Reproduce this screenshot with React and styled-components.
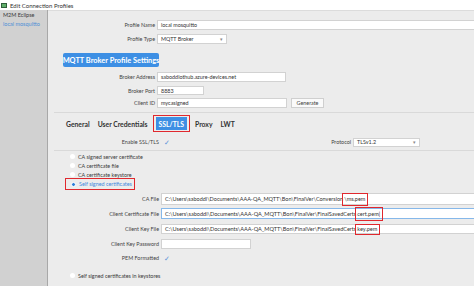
import styled, { createGlobalStyle } from "styled-components";

const GlobalStyle = createGlobalStyle`
  html, body {
    margin: 0;
    padding: 0;
    background: #fff;
    overflow: hidden;
  }
  body {
    font-family: Lato, "Open Sans", sans-serif;
    color: #2b2b2b;
  }
`;

const Window = styled.div`
  width: 474px;
  height: 286px;
  display: flex;
  flex-direction: column;
  overflow: hidden;
  background: #fff;
`;

const TitleBar = styled.div`
  height: 10px;
  flex: none;
  display: flex;
  align-items: center;
  gap: 3px;
  padding-left: 1px;
  font-size: 6px;
  color: #333;
`;

const Body = styled.div`
  flex: 1;
  display: flex;
  min-height: 0;
`;

const Sidebar = styled.div`
  width: 47px;
  flex: none;
  background: #d1d1d1;
  border-right: 1px solid #a8a8a8;
  padding-top: 1px;
  font-size: 5.5px;
`;

const SideItem = styled.div`
  height: 9px;
  line-height: 9px;
  padding-left: 3px;
  color: ${(p) => (p.active ? "#4f8fd6" : "#3a3a3a")};
`;

const Main = styled.div`
  flex: 1;
  min-width: 0;
  background: #ececec;
  border-top: 1px solid #dcdcdc;
  display: flex;
  flex-direction: column;
  padding-top: 9px;
  font-size: 5.4px;
  overflow: hidden;
`;

const Row = styled.div`
  flex: none;
  display: flex;
  align-items: center;
  gap: 2px;
  height: ${(p) => p.h || 10}px;
  margin-top: ${(p) => p.mt || 0}px;
`;

const Label = styled.div`
  width: ${(p) => p.w || 107}px;
  flex: none;
  text-align: right;
  color: #444;
  white-space: nowrap;
`;

const Input = styled.div`
  box-sizing: border-box;
  height: 100%;
  width: ${(p) => (p.w ? p.w + "px" : "auto")};
  flex: ${(p) => (p.w ? "none" : 1)};
  min-width: 0;
  background: #fff;
  border: 1px solid ${(p) => (p.focus ? "#86b8ea" : "#d2d2d2")};
  border-right-width: ${(p) => (p.w ? 1 : 0)}px;
  display: flex;
  align-items: center;
  padding-left: 3px;
  white-space: nowrap;
  color: #333;
  font-size: ${(p) => p.fs || 5.4}px;
`;

const Select = styled(Input)`
  justify-content: space-between;
  padding-right: 3px;
  border-right-width: 1px;
`;

const Caret = styled.span`
  color: #8a8a8a;
  font-size: 5px;
`;

const SectionButton = styled.div`
  flex: none;
  margin: 9px 0 0 15px;
  width: 96px;
  height: 14px;
  box-sizing: border-box;
  background: #3d8fe4;
  border-radius: 2px;
  color: #fff;
  font-weight: 700;
  font-size: 7.4px;
  display: flex;
  align-items: center;
  justify-content: center;
  white-space: nowrap;
`;

const SmallButton = styled.div`
  margin-left: 2px;
  width: 33px;
  height: 10px;
  box-sizing: border-box;
  background: #fafafa;
  border: 1px solid #cfcfcf;
  display: flex;
  align-items: center;
  justify-content: center;
  color: #444;
`;

const Separator = styled.div`
  flex: none;
  height: 1px;
  background: #d9d9d9;
  margin: ${(p) => p.mt || 0}px 0 0 6px;
`;

const Tabs = styled.div`
  flex: none;
  display: flex;
  align-items: center;
  gap: 8px;
  height: 15px;
  margin: 3px 0 0 18px;
  font-weight: 700;
  font-size: 6.8px;
  color: #333;
`;

const Tab = styled.div`
  white-space: nowrap;
`;

const SelectedTab = styled.div`
  border: 1.5px solid #e0282e;
  padding: 1px 2px;
  margin: 0 -3px;
`;

const TabInner = styled.div`
  background: #3d8fe4;
  color: #fff;
  padding: 0 3px;
  height: 13px;
  display: flex;
  align-items: center;
`;

const Check = styled.span`
  color: #5b93d8;
  font-size: 7px;
  margin-left: 3px;
`;

const Protocol = styled.div`
  margin: 0 54px 0 auto;
  height: 9px;
  display: flex;
  align-items: center;
  gap: 2px;
`;

const RadioList = styled.div`
  flex: none;
  display: flex;
  flex-direction: column;
  margin: ${(p) => p.mt || 0}px 0 0 17px;
`;

const RadioRow = styled.div`
  display: flex;
  align-items: center;
  gap: 3px;
  height: ${(p) => p.h || 9}px;
  padding-left: 5px;
  color: ${(p) => (p.active ? "#3f88dc" : "#3a3a3a")};
  white-space: nowrap;
`;

const Highlight = styled.div`
  align-self: flex-start;
  border: 1.5px solid #e0282e;
  padding: 1px 2px 1px 0;
  margin-top: -1px;
`;

const Radio = styled.span`
  width: 5px;
  height: 5px;
  border-radius: 50%;
  box-sizing: border-box;
  border: ${(p) => (p.on ? "1.5px solid #fff" : "none")};
  background: ${(p) => (p.on ? "#2f7fd8" : "#fff")};
`;

const Marked = styled.span`
  display: inline-flex;
  align-items: center;
  border: 1.5px solid #e0282e;
  height: ${(p) => p.h || 13}px;
  box-sizing: border-box;
  padding: 0 2px 0 1px;
  margin-left: -1px;
`;

function TitleIcon() {
  return (
    <svg width="6" height="5" viewBox="0 0 6 5">
      <rect x="0" y="0" width="6" height="5" fill="#2f5d3a" />
      <rect x="1" y="1" width="4" height="3" fill="#5fae6a" />
    </svg>
  );
}

const base = "C:\\Users\\saboddi\\Documents\\AAA-QA_MQTT\\Bon\\FinalVer\\";

export default function App() {
  return (
    <>
      <GlobalStyle />
      <Window>
        <TitleBar>
          <TitleIcon />
          Edit Connection Profiles
        </TitleBar>
        <Body>
          <Sidebar>
            <SideItem>M2M Eclipse</SideItem>
            <SideItem active={1}>local mosquitto</SideItem>
          </Sidebar>
          <Main>
            <Row>
              <Label>Profile Name</Label>
              <Input>local mosquitto</Input>
            </Row>
            <Row mt={4}>
              <Label>Profile Type</Label>
              <Select w={70}>
                MQTT Broker <Caret>▾</Caret>
              </Select>
            </Row>
            <SectionButton>MQTT Broker Profile Settings</SectionButton>
            <Row mt={5}>
              <Label>Broker Address</Label>
              <Input w={129}>saboddiothub.azure-devices.net</Input>
            </Row>
            <Row mt={4} h={9}>
              <Label>Broker Port</Label>
              <Input w={47}>8883</Input>
            </Row>
            <Row mt={3}>
              <Label>Client ID</Label>
              <Input w={130}>mycasigned</Input>
              <SmallButton>Generate</SmallButton>
            </Row>
            <Separator mt={4} />
            <Tabs>
              <Tab>General</Tab>
              <Tab>User Credentials</Tab>
              <SelectedTab>
                <TabInner>SSL/TLS</TabInner>
              </SelectedTab>
              <Tab>Proxy</Tab>
              <Tab>LWT</Tab>
            </Tabs>
            <Row mt={6} h={10}>
              <Label w={111}>Enable SSL/TLS</Label>
              <Check>✓</Check>
              <Protocol>
                <Label w={40}>Protocol</Label>
                <Select w={67}>
                  TLSv1.2 <Caret>▾</Caret>
                </Select>
              </Protocol>
            </Row>
            <Separator mt={3} />
            <RadioList mt={1}>
              <RadioRow>
                <Radio />
                CA signed server certificate
              </RadioRow>
              <RadioRow>
                <Radio />
                CA certificate file
              </RadioRow>
              <RadioRow>
                <Radio />
                CA certificate keystore
              </RadioRow>
              <Highlight>
                <RadioRow active={1} h={8}>
                  <Radio on={1} />
                  Self signed certificates
                </RadioRow>
              </Highlight>
            </RadioList>
            <Row mt={3} h={12}>
              <Label w={111}>CA File</Label>
              <Input fs={5.5}>
                {base}Conversion
                <Marked>\ms.pem</Marked>
              </Input>
            </Row>
            <Row mt={3} h={11}>
              <Label w={111}>Client Certificate File</Label>
              <Input fs={5.55} focus={1}>
                {base}FinalSavedCerts
                <Marked h={14}>cert.pem|</Marked>
              </Input>
            </Row>
            <Row mt={5} h={10}>
              <Label w={111}>Client Key File</Label>
              <Input fs={5.55}>
                {base}FinalSavedCerts
                <Marked h={11}>key.pem</Marked>
              </Input>
            </Row>
            <Row mt={5} h={10}>
              <Label w={111}>Client Key Password</Label>
              <Input w={90} />
            </Row>
            <Row mt={4} h={10}>
              <Label w={111}>PEM Formatted</Label>
              <Check>✓</Check>
            </Row>
            <RadioList mt={8}>
              <RadioRow>
                <Radio />
                Self signed certificates in keystores
              </RadioRow>
            </RadioList>
          </Main>
        </Body>
      </Window>
    </>
  );
}
